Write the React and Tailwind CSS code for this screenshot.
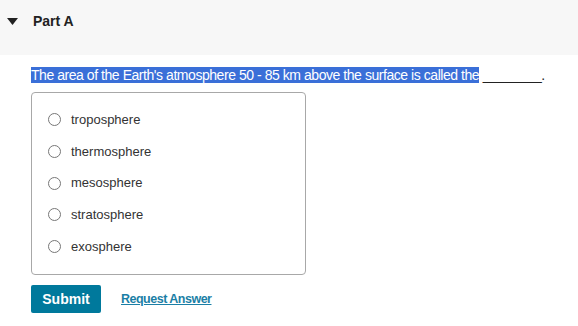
import React from "react";

const options = ["troposphere", "thermosphere", "mesosphere", "stratosphere", "exosphere"];

export default function App() {
  return (
    <div className="w-[578px] h-[326px] bg-white overflow-hidden" style={{ fontFamily: "'Liberation Sans', Arial, sans-serif" }}>
      <div className="h-[55px] bg-[#f7f7f7] flex items-center pl-[7px]">
        <svg width="11" height="7" viewBox="0 0 11 7" className="mt-[-12px]">
          <path d="M0 0 L11 0 L5.5 7 Z" fill="#222" />
        </svg>
        <span className="ml-[15px] mt-[-12px] text-[14px] font-bold text-[#222]">Part A</span>
      </div>
      <div className="pl-[31px] pt-[11px]">
        <p className="text-[14px] leading-[18px] text-[#222] tracking-[-0.45px]">
          <span className="bg-[#3a6fd8] text-white">The area of the Earth's atmosphere 50 - 85 km above the surface is called the</span>{" "}
          ________.
        </p>
        <div className="mt-[8px] w-[275px] h-[183px] border border-[#a8a8a8] rounded-[4px] pt-[11px] pl-[16px]">
          {options.map((o) => (
            <label key={o} className="flex items-center h-[31.7px]">
              <span className="w-[13px] h-[13px] rounded-full border border-[#777] bg-white" />
              <span className="ml-[10px] text-[13px] text-[#333]">{o}</span>
            </label>
          ))}
        </div>
        <div className="flex items-center mt-[10px]">
          <button className="w-[70px] h-[28px] bg-[#00799c] rounded-[2px] text-white text-[14px] font-bold">Submit</button>
          <a className="ml-[20px] text-[12.5px] tracking-[-0.5px] font-bold text-[#1b7fa6] underline">Request Answer</a>
        </div>
      </div>
    </div>
  );
}
